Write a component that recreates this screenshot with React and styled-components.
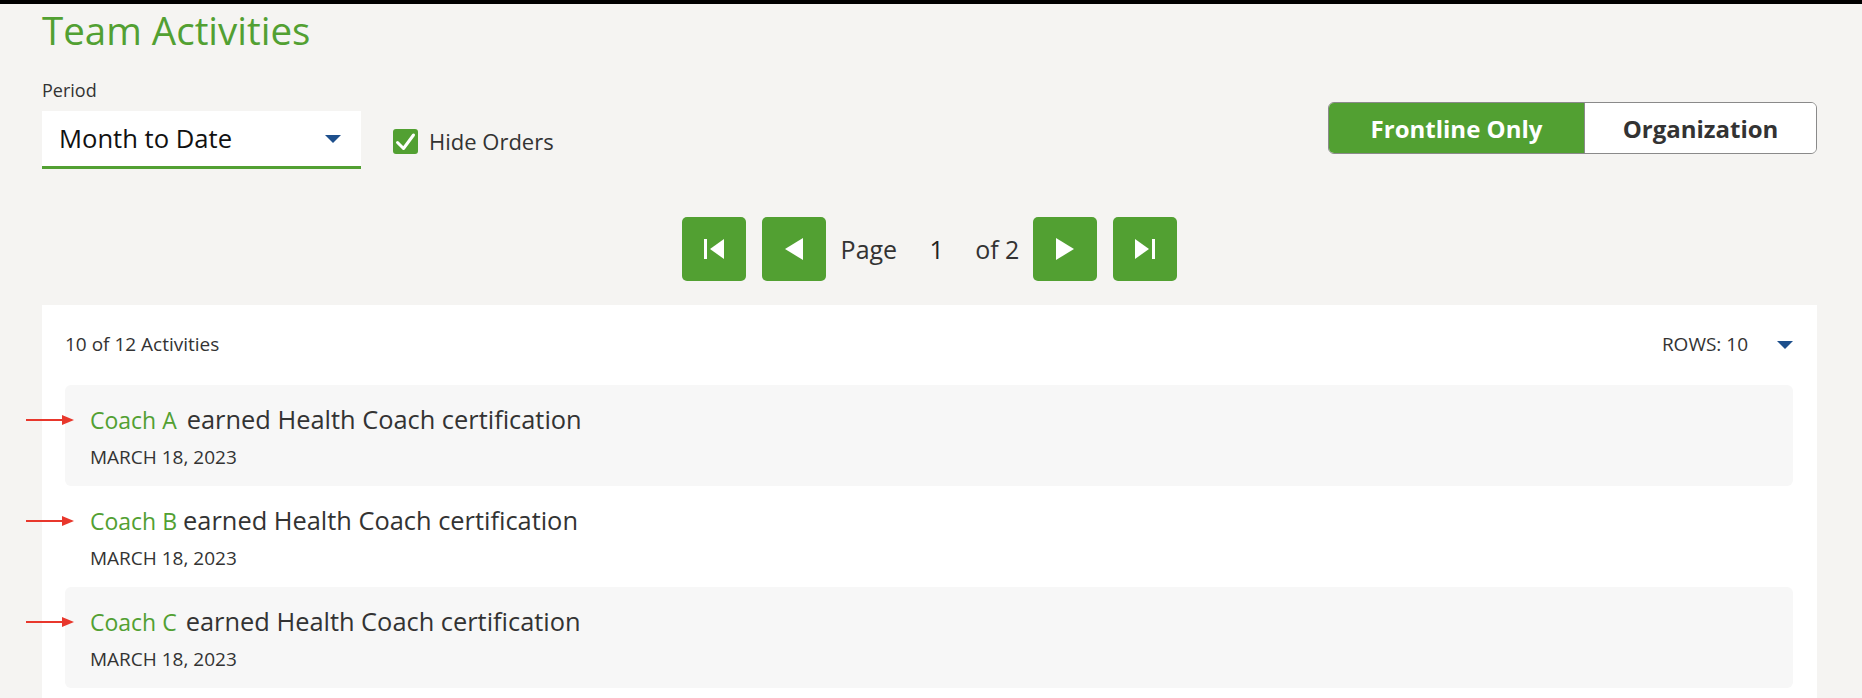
import styled, { createGlobalStyle } from 'styled-components';

const GREEN = '#52a032';
const NAVY = '#1d4f8c';

const GlobalStyle = createGlobalStyle`
  body {
    margin: 0;
    background: #f5f4f2;
    font-family: "Open Sans", "Liberation Sans", sans-serif;
    color: #333;
  }
`;

const actividades = [
  { nome: 'Coach A', texto: 'earned Health Coach certification', data: 'MARCH 18, 2023', espaco: 10 },
  { nome: 'Coach B', texto: 'earned Health Coach certification', data: 'MARCH 18, 2023', espaco: 6 },
  { nome: 'Coach C', texto: 'earned Health Coach certification', data: 'MARCH 18, 2023', espaco: 9 },
];

function Triangulo({ largura = 16, altura = 8 }) {
  return (
    <svg width={largura} height={altura} viewBox={`0 0 ${largura} ${altura}`}>
      <polygon points={`0,0 ${largura},0 ${largura / 2},${altura}`} fill={NAVY} />
    </svg>
  );
}

function IconePrimeira() {
  return (
    <svg width="20" height="20" viewBox="0 0 20 20">
      <rect x="0" y="0" width="3" height="20" fill="#fff" />
      <polygon points="20,0 20,20 6,10" fill="#fff" />
    </svg>
  );
}

function IconeAnterior() {
  return (
    <svg width="18" height="22" viewBox="0 0 18 22">
      <polygon points="18,0 18,22 0,11" fill="#fff" />
    </svg>
  );
}

function IconeProxima() {
  return (
    <svg width="18" height="22" viewBox="0 0 18 22">
      <polygon points="0,0 0,22 18,11" fill="#fff" />
    </svg>
  );
}

function IconeUltima() {
  return (
    <svg width="20" height="20" viewBox="0 0 20 20">
      <polygon points="0,0 0,20 14,10" fill="#fff" />
      <rect x="17" y="0" width="3" height="20" fill="#fff" />
    </svg>
  );
}

function SetaVermelha() {
  return (
    <svg width="48" height="12" viewBox="0 0 48 12">
      <line x1="0" y1="6" x2="38" y2="6" stroke="#e8372c" strokeWidth="2" />
      <polygon points="36,1 48,6 36,11" fill="#e8372c" />
    </svg>
  );
}

export default function App() {
  return (
    <>
      <GlobalStyle />
      <Pagina>
        <Titulo>Team Activities</Titulo>

        <BarraFiltros>
          <Campo>
            <Rotulo>Period</Rotulo>
            <LinhaControles>
              <Seletor>
                <span>Month to Date</span>
                <Triangulo />
              </Seletor>
              <Caixa>
                <Marcador>
                  <svg width="25" height="25" viewBox="0 0 25 25">
                    <polyline points="4.5,13.5 10.5,19.5 20.5,6" fill="none" stroke="#fff" strokeWidth="3" strokeLinecap="round" strokeLinejoin="round" />
                  </svg>
                </Marcador>
                Hide Orders
              </Caixa>
            </LinhaControles>
          </Campo>

          <Alternador>
            <BotaoAlternar $ativo $largura={256}>Frontline Only</BotaoAlternar>
            <BotaoAlternar $largura={231}>Organization</BotaoAlternar>
          </Alternador>
        </BarraFiltros>

        <Paginacao>
          <BotaoPagina><IconePrimeira /></BotaoPagina>
          <BotaoPagina><IconeAnterior /></BotaoPagina>
          <TextoPagina $esquerda={15}>Page</TextoPagina>
          <NumeroPagina>1</NumeroPagina>
          <TextoPagina $esquerda={13}>of 2</TextoPagina>
          <BotaoPagina><IconeProxima /></BotaoPagina>
          <BotaoPagina><IconeUltima /></BotaoPagina>
        </Paginacao>

        <Painel>
          <CabecalhoPainel>
            <span>10 of 12 Activities</span>
            <Linhas>
              ROWS: 10
              <Triangulo />
            </Linhas>
          </CabecalhoPainel>

          <Lista>
            {actividades.map((a, i) => (
              <Item key={a.nome} $listrado={i % 2 === 0}>
                <Seta><SetaVermelha /></Seta>
                <LinhaTitulo>
                  <Nome $espaco={a.espaco}>{a.nome}</Nome>
                  {a.texto}
                </LinhaTitulo>
                <Data>{a.data}</Data>
              </Item>
            ))}
          </Lista>
        </Painel>
      </Pagina>
    </>
  );
}

const Pagina = styled.div`
  box-sizing: border-box;
  height: 100vh;
  overflow: hidden;
  border-top: 4px solid #000;
  padding: 2px 45px 0 42px;
`;

const Titulo = styled.h1`
  margin: 0;
  font-size: 38.5px; line-height: 48px; font-weight: 400;
  color: ${GREEN};
`;

const BarraFiltros = styled.div`
  display: flex; justify-content: space-between; align-items: flex-start;
  margin-top: 24px;
`;

const Campo = styled.div`
  display: flex; flex-direction: column;
`;

const Rotulo = styled.label`
  font-size: 18px; line-height: 24px; color: #333;
`;

const LinhaControles = styled.div`
  display: flex; align-items: center; gap: 32px;
  margin-top: 9px;
`;

const Seletor = styled.div`
  box-sizing: border-box;
  width: 319px; height: 58px;
  display: flex; align-items: center; justify-content: space-between;
  padding: 0 20px 0 17px;
  background: #fff;
  border-bottom: 3px solid ${GREEN};
  font-size: 25.6px; color: #111;
`;

const Caixa = styled.label`
  display: flex; align-items: center; gap: 11px;
  font-size: 22px; line-height: 30px; color: #333;
  margin-top: 2px;
`;

const Marcador = styled.span`
  width: 25px; height: 25px; border-radius: 3px;
  background: ${GREEN};
  display: flex;
`;

const Alternador = styled.div`
  display: flex;
  margin-top: 24px;
  height: 52px;
  box-sizing: border-box;
  border: 1px solid #8a8a8a;
  border-radius: 6px;
  overflow: hidden;
`;

const BotaoAlternar = styled.button`
  box-sizing: border-box;
  width: ${(p) => p.$largura}px;
  border: none;
  padding: 0;
  font-family: inherit; font-size: 24px; font-weight: 700;
  background: ${(p) => (p.$ativo ? GREEN : '#fff')};
  color: ${(p) => (p.$ativo ? '#fff' : '#333')};
  border-right: ${(p) => (p.$ativo ? '1px solid #8a8a8a' : 'none')};
`;

const Paginacao = styled.div`
  display: flex; align-items: center; justify-content: center;
  margin-top: 48px;
`;

const BotaoPagina = styled.button`
  width: 64px; height: 64px;
  border: none; border-radius: 5px;
  background: ${GREEN};
  display: flex; align-items: center; justify-content: center;
  padding: 0;
  & + & { margin-left: 16px; }
`;

const TextoPagina = styled.span`
  font-size: 25px; color: #333;
  margin: 0 14px 0 ${(p) => p.$esquerda}px;
`;

const NumeroPagina = styled.span`
  width: 51px; text-align: center;
  font-size: 25px; color: #222;
`;

const Painel = styled.div`
  margin-top: 24px;
  background: #fff;
  padding: 26px 24px 24px 23px;
`;

const CabecalhoPainel = styled.div`
  display: flex; justify-content: space-between; align-items: center;
  font-size: 19px; line-height: 27px; color: #333;
`;

const Linhas = styled.span`
  display: flex; align-items: center; gap: 29px;
`;

const Lista = styled.div`
  margin-top: 27px;
`;

const Item = styled.div`
  position: relative;
  padding: 17px 24px 16px 25px;
  border-radius: 6px;
  background: ${(p) => (p.$listrado ? '#f7f7f7' : '#fff')};
`;

const Seta = styled.span`
  position: absolute;
  left: -39px; top: 29px;
  display: flex;
`;

const LinhaTitulo = styled.div`
  font-size: 25.4px; line-height: 35px; color: #333;
`;

const Nome = styled.span`
  font-size: 23px; color: ${GREEN};
  margin-right: ${(p) => p.$espaco}px;
`;

const Data = styled.div`
  margin-top: 6px;
  font-size: 19px; line-height: 26px; color: #333;
`;
